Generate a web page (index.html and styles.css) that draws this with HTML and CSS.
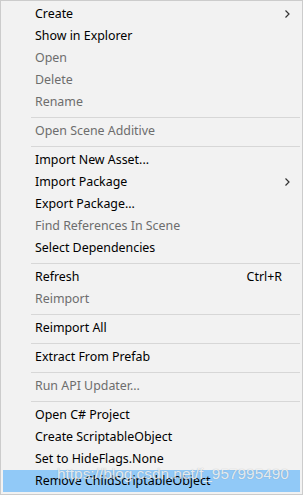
FILE: index.html
```html
<!DOCTYPE html>
<html>
<head>
<meta charset="utf-8">
<link rel="stylesheet" href="styles.css">
</head>
<body>
<div class="menu">
  <div class="item">Create<span class="sub"><svg width="5" height="8" viewBox="0 0 5 8"><polyline points="0.5,0.5 4,4 0.5,7.5" fill="none" stroke="#333" stroke-width="1.2"/></svg></span></div>
  <div class="item">Show in Explorer</div>
  <div class="item dis">Open</div>
  <div class="item dis">Delete</div>
  <div class="item dis">Rename</div>
  <div class="sep"></div>
  <div class="item dis">Open Scene Additive</div>
  <div class="sep"></div>
  <div class="item">Import New Asset...</div>
  <div class="item">Import Package<span class="sub"><svg width="5" height="8" viewBox="0 0 5 8"><polyline points="0.5,0.5 4,4 0.5,7.5" fill="none" stroke="#333" stroke-width="1.2"/></svg></span></div>
  <div class="item">Export Package...</div>
  <div class="item dis">Find References In Scene</div>
  <div class="item">Select Dependencies</div>
  <div class="sep"></div>
  <div class="item">Refresh<span class="key">Ctrl+R</span></div>
  <div class="item dis">Reimport</div>
  <div class="sep"></div>
  <div class="item">Reimport All</div>
  <div class="sep"></div>
  <div class="item">Extract From Prefab</div>
  <div class="sep"></div>
  <div class="item dis">Run API Updater...</div>
  <div class="sep"></div>
  <div class="item">Open C# Project</div>
  <div class="item">Create ScriptableObject</div>
  <div class="item">Set to HideFlags.None</div>
  <div class="item hl">Remove ChildScriptableObject<span class="mark">https://blog.csdn.net/f_957995490</span></div>
</div>
</body>
</html>
```
FILE: styles.css
```css
html, body {
  margin: 0;
  padding: 0;
  background: #f2f2f2;
}
.menu {
  width: 303px;
  height: 495px;
  box-sizing: border-box;
  border: 1px solid #cccccc;
  background: #f2f2f2;
  padding: 2px 2px 2px 2px;
  font-family: "Noto Sans", "Open Sans", sans-serif;
  font-size: 12.4px;
  color: #000;
}
.item {
  position: relative;
  height: 22px;
  line-height: 22px;
  padding-left: 32px;
  display: flex;
  align-items: center;
  white-space: nowrap;
}
.item.dis {
  color: #6d6d6d;
}
.item.hl {
  background: #91c9f7;
}
.sub {
  margin-left: auto;
  margin-right: 10px;
  display: flex;
  align-items: center;
}
.key {
  margin-left: auto;
  margin-right: 18px;
}
.sep {
  height: 1px;
  background: #d7d7d7;
  margin: 4px 0 2px 28px;
}
.mark {
  position: absolute;
  left: 54px;
  top: -3px;
  font-family: "Liberation Sans", Arial, sans-serif;
  font-size: 15.4px;
  line-height: 14px;
  color: rgba(255, 255, 255, 0.8);
  text-shadow: 0 0 1px rgba(90, 90, 90, 0.45);
}
```
